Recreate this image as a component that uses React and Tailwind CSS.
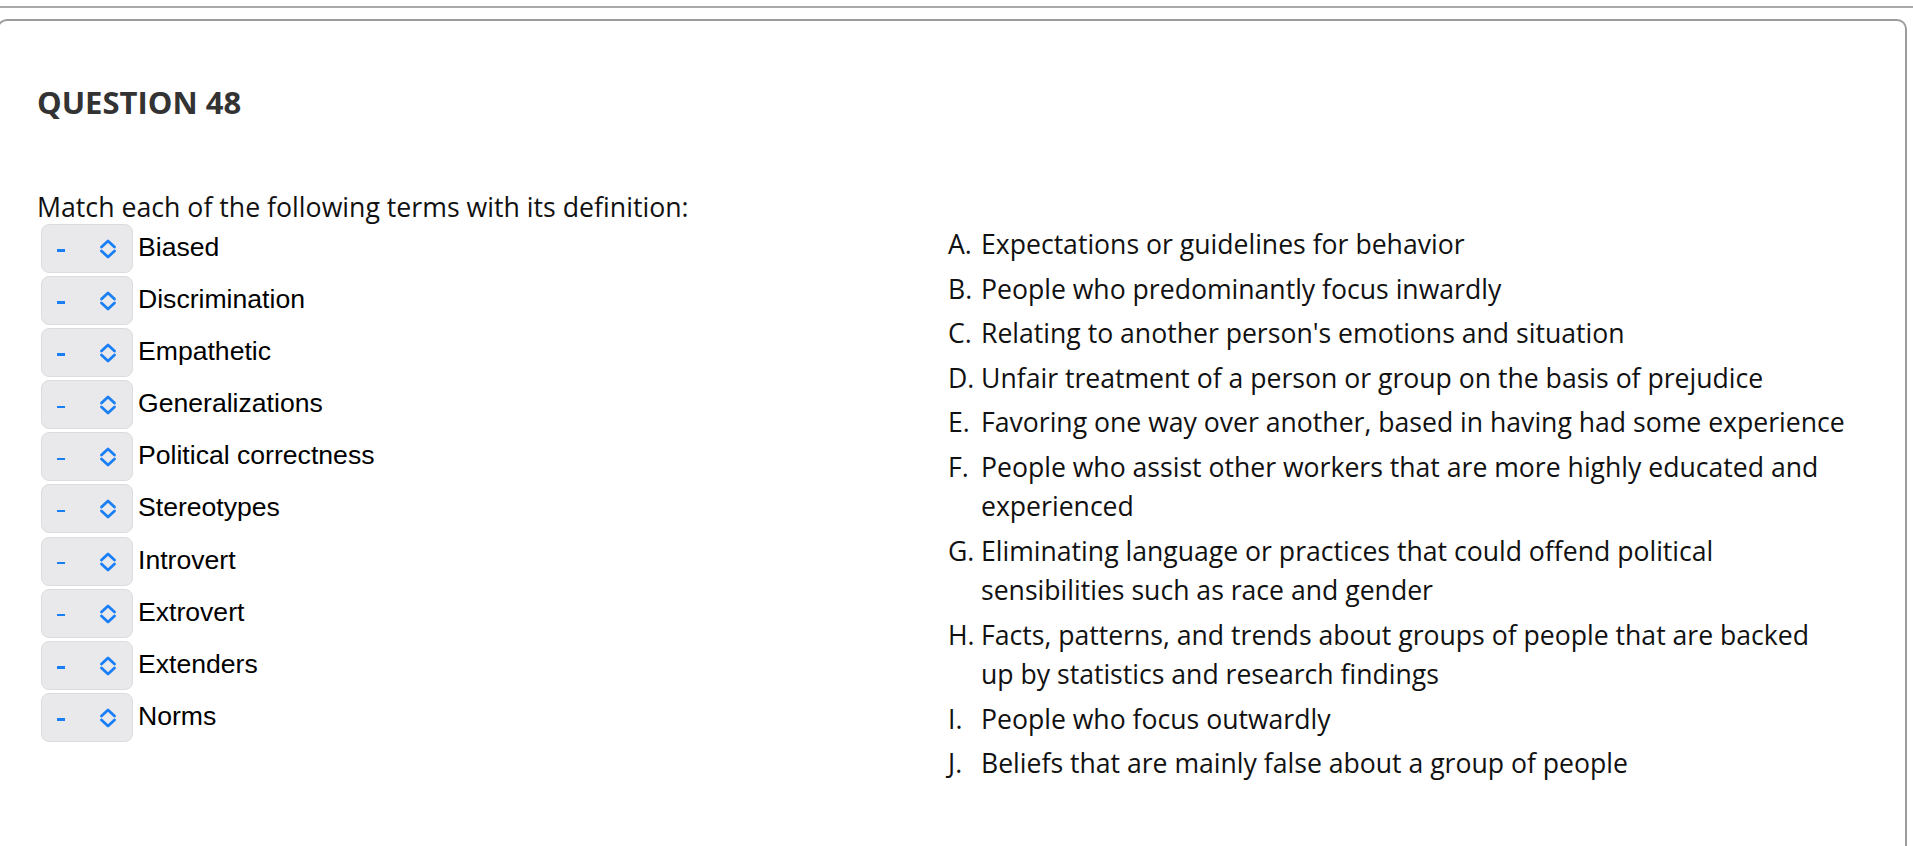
import React from 'react';

const terms = [
  'Biased',
  'Discrimination',
  'Empathetic',
  'Generalizations',
  'Political correctness',
  'Stereotypes',
  'Introvert',
  'Extrovert',
  'Extenders',
  'Norms',
];

// wrapped lines kept as in the original layout
const definitions = [
  { letter: 'A.', lines: ['Expectations or guidelines for behavior'] },
  { letter: 'B.', lines: ['People who predominantly focus inwardly'] },
  { letter: 'C.', lines: ["Relating to another person's emotions and situation"] },
  { letter: 'D.', lines: ['Unfair treatment of a person or group on the basis of prejudice'] },
  { letter: 'E.', lines: ['Favoring one way over another, based in having had some experience'] },
  { letter: 'F.', lines: ['People who assist other workers that are more highly educated and', 'experienced'] },
  { letter: 'G.', lines: ['Eliminating language or practices that could offend political', 'sensibilities such as race and gender'] },
  { letter: 'H.', lines: ['Facts, patterns, and trends about groups of people that are backed', 'up by statistics and research findings'] },
  { letter: 'I.', lines: ['People who focus outwardly'] },
  { letter: 'J.', lines: ['Beliefs that are mainly false about a group of people'] },
];

const Chevrons = () => (
  <svg width="18" height="20" viewBox="0 0 18 20" fill="none" stroke="#1a7ff5" strokeWidth="2.8" strokeLinecap="round" strokeLinejoin="round">
    <path d="M2.5 8 L9 2 L15.5 8" />
    <path d="M2.5 12 L9 18 L15.5 12" />
  </svg>
);

const SelectBox = () => (
  <div className="ml-[4px] flex h-[49px] w-[92px] shrink-0 items-center rounded-[8px] border border-[#dcdcde] bg-[#e9e9eb] pl-[15px]">
    <span className="mt-[4px] h-[2.5px] w-[8px] bg-[#1a7ff5]" />
    <span className="ml-[34px] mt-[1px]">
      <Chevrons />
    </span>
  </div>
);

export default function App() {
  return (
    <div className="min-h-[846px] overflow-hidden bg-white pt-[6px]">
      <div className="h-[2px] w-full bg-[#a9a9a9]" />
      <div className="ml-[-3px] mt-[11px] min-h-[830px] w-[1910px] rounded-t-[10px] border-2 border-b-0 border-[#9c9c9c] pl-[38px] pt-[66px]">
        <h2 className="font-['Open_Sans',sans-serif] text-[31px] font-bold leading-[31px] text-[#333333]">
          QUESTION 48
        </h2>
        <p className="mt-[76px] font-['Open_Sans',sans-serif] text-[26.7px] leading-[26.5px] text-[#111111]">
          Match each of the following terms with its definition:
        </p>
        <div className="mt-[3.5px] flex">
          <div className="flex w-[911px] shrink-0 flex-col gap-[3.1px]">
            {terms.map((term) => (
              <div key={term} className="flex items-start">
                <SelectBox />
                <span className="ml-[5px] mt-[10px] font-['Liberation_Sans',Arial,sans-serif] text-[26.6px] leading-[26px] text-black">
                  {term}
                </span>
              </div>
            ))}
          </div>
          <div className="flex flex-col gap-[5px] pt-[1px] font-['Open_Sans',sans-serif] text-[26.6px] leading-[39.5px] text-[#111111]">
            {definitions.map((d) => (
              <div key={d.letter} className="flex">
                <span className="w-[33px] shrink-0">{d.letter}</span>
                <div className="whitespace-nowrap">
                  {d.lines.map((line) => (
                    <div key={line}>{line}</div>
                  ))}
                </div>
              </div>
            ))}
          </div>
        </div>
      </div>
    </div>
  );
}
